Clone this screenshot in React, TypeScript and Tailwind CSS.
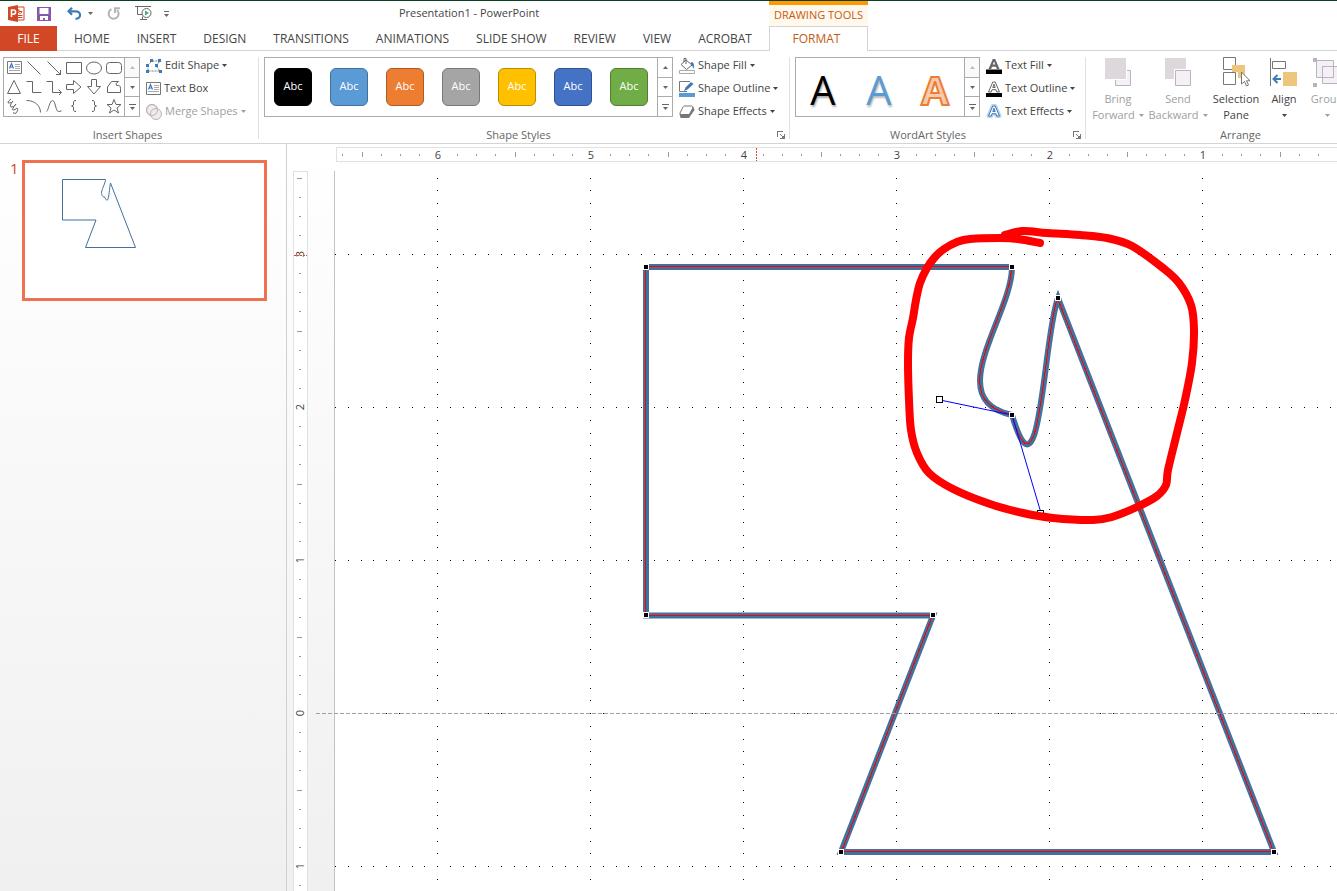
import type { ReactNode } from "react";

const TABS = [
  "HOME",
  "INSERT",
  "DESIGN",
  "TRANSITIONS",
  "ANIMATIONS",
  "SLIDE SHOW",
  "REVIEW",
  "VIEW",
  "ACROBAT",
];

const SHAPE_STYLES = [
  { name: "Black", className: "border-black bg-black" },
  { name: "Blue", className: "border-[#41719c] bg-[#5b9bd5]" },
  { name: "Orange", className: "border-[#ae5a21] bg-[#ed7d31]" },
  { name: "Gray", className: "border-[#787878] bg-[#a5a5a5]" },
  { name: "Gold", className: "border-[#bc8c00] bg-[#ffc000]" },
  { name: "Dark blue", className: "border-[#2f528f] bg-[#4472c4]" },
  { name: "Green", className: "border-[#507e32] bg-[#70ad47]" },
];

/* ---------- small shared pieces ---------- */

const Caret = ({ className = "" }: { className?: string }) => (
  <svg width="5" height="3" className={`shrink-0 ${className}`} fill="currentColor">
    <path d="M0 0h5L2.5 3z" />
  </svg>
);

const Launcher = ({ label }: { label: string }) => (
  <button aria-label={label} className="absolute right-1 bottom-1 text-[#777]">
    <svg width="8" height="8" fill="none" stroke="currentColor" shapeRendering="crispEdges">
      <path d="M.5 6V.5H6M3 3l3 3M7.5 3v4.5H3M6.5 5v1.5H5" />
    </svg>
  </button>
);

const GalleryScroll = ({ upDisabled = false }: { upDisabled?: boolean }) => (
  <div className="flex w-[15px] shrink-0 flex-col divide-y divide-[#ababab] border-l border-[#ababab] text-[#666]">
    <button
      aria-label="Previous row"
      className={`flex flex-1 items-center justify-center ${upDisabled ? "bg-[#fafafa] text-[#bbb]" : ""}`}
    >
      <Caret className="rotate-180" />
    </button>
    <button aria-label="Next row" className="flex flex-1 items-center justify-center">
      <Caret />
    </button>
    <button aria-label="More" className="flex flex-1 flex-col items-center justify-center gap-0.5">
      <span className="h-px w-[7px] bg-current" />
      <Caret />
    </button>
  </div>
);

const Group = ({
  label,
  className,
  launcher,
  children,
}: {
  label: string;
  className: string;
  launcher?: string;
  children: ReactNode;
}) => (
  <section
    aria-label={label}
    className={`relative flex shrink-0 flex-col justify-between ${className}`}
  >
    <div className="flex">{children}</div>
    <div className="text-center leading-4 text-[#666]">{label}</div>
    {launcher && <Launcher label={launcher} />}
  </section>
);

const Divider = () => <div className="mb-1 w-px shrink-0 bg-[#e1e1e1]" />;

const Command = ({
  icon,
  label,
  caret = true,
  disabled = false,
}: {
  icon: ReactNode;
  label: string;
  caret?: boolean;
  disabled?: boolean;
}) => (
  <button
    disabled={disabled}
    className={`flex h-[23px] items-center gap-[3px] whitespace-nowrap ${disabled ? "text-[#a0a0a0]" : "text-[#444]"}`}
  >
    {icon}
    <span>{label}</span>
    {caret && <Caret />}
  </button>
);

/* ---------- quick access icons ---------- */

const PowerPointIcon = () => (
  <svg width="17" height="17" viewBox="0 0 17 17">
    <path d="M9 2h7v13H9z" fill="#fff" stroke="#d24726" />
    <path d="M11 4.500a2 2 0 1 0 3 2h-3zM10 10.500h4.500M10 12.500h4.500" fill="none" stroke="#d24726" />
    <path d="M0 2l10-2v17L0 15z" fill="#d24726" />
    <path d="M3.500 12V5h2a2 2 0 0 1 0 4.200h-2" fill="none" stroke="#fff" strokeWidth="1.600" />
  </svg>
);

const SaveIcon = () => (
  <svg width="14" height="14" viewBox="0 0 14 14">
    <path d="M0 0h14v14H0z" fill="#8757a9" />
    <path d="M2.500 1h9v6h-9zM3 9h8v4H8v-2H6v2H3z" fill="#fff" />
  </svg>
);

const UndoIcon = () => (
  <svg width="15" height="13" viewBox="0 0 15 13" fill="none" stroke="#3f79b7" strokeWidth="2.200">
    <path d="M5 .800L1.500 4.300 5 7.800M2 4.300h7c5.500 0 5.500 7.500-.500 7.500" />
  </svg>
);

const RepeatIcon = () => (
  <svg width="14" height="14" viewBox="0 0 14 14" fill="none" stroke="#b5b5b5" strokeWidth="2">
    <path d="M4.500 2.200A5 5 0 1 0 10 3" />
    <path d="M8 6V1.200h5" />
  </svg>
);

const SlideShowIcon = () => (
  <svg width="17" height="17" viewBox="0 0 17 17" fill="none" stroke="#666">
    <path d="M0 1.500h16M2.500 2v7.500h5M5 14.500h2.500v-3M7.500 14.500H12" />
    <circle cx="11.500" cy="8" r="4.500" fill="#fff" />
    <path d="M10 5.500v5L14 8z" fill="#4fa37c" stroke="none" />
  </svg>
);

/* ---------- ribbon icons ---------- */

const TextBoxIcon = () => (
  <svg width="15" height="13" viewBox="0 0 15 13" fill="none">
    <path d="M.5.5h14v12H.5z" fill="#fff" stroke="#777" />
    <path d="M2.500 7.500L4.500 2.500l2 5M3.200 6h2.600" stroke="#3f79b7" strokeWidth="1.200" />
    <path d="M8 3.500h5M8 5.500h5M8 7.500h5M2 9.500h11" stroke="#aaa" />
  </svg>
);

const EditShapeIcon = () => (
  <svg width="16" height="14" viewBox="0 0 16 14">
    <path d="M2 6L6 2h8l-4 5 4 5H2z" fill="none" stroke="#777" strokeDasharray="2 1" />
    <path
      d="M4 0h3v3H4zM12 0h3v3h-3zM0 5h3v3H0zM9 5h3v3H9zM0 11h3v3H0zM13 11h3v3h-3z"
      fill="#3f79b7"
    />
  </svg>
);

const MergeIcon = () => (
  <svg width="16" height="16" viewBox="0 0 16 16" fill="#efebef" stroke="#b9b4b9">
    <circle cx="6" cy="6" r="5.500" />
    <circle cx="10" cy="10" r="5.500" />
    <circle cx="6" cy="6" r="5.500" fill="none" />
  </svg>
);

const FillIcon = () => (
  <svg width="16" height="16" viewBox="0 0 16 16" fill="none" stroke="#666">
    <path d="M2 6.500L7 2l6 5-5.500 4.500zM7 6V.5h-2V4" fill="#fff" />
    <path d="M12 4c3 0 3.500 3 2.500 7-1-2-1-4-2.500-4.500z" fill="#3f79b7" stroke="none" />
    <path d="M.5 12.500h15v3H.5z" fill="#fff" stroke="#aaa" />
  </svg>
);

const OutlineIcon = () => (
  <svg width="16" height="16" viewBox="0 0 16 16" fill="none">
    <path d="M11 .5H.5v10H8" stroke="#777" />
    <path d="M5 10l1.500-3.500L12 1l2.500 2L8.500 8.500z" fill="#3f79b7" />
    <path d="M0 12h16v4H0z" fill="#5b9bd5" />
  </svg>
);

const EffectsIcon = () => (
  <svg width="16" height="14" viewBox="0 0 16 14">
    <path d="M.5 9l1 4h8.500l5.500-8-1-3z" fill="#777" />
    <path
      d="M5.500 1h7a1.500 1.500 0 0 1 1.300 2l-3 5.500a2 2 0 0 1-1.700 1H2A1.200 1.200 0 0 1 1 8l3-6a2 2 0 0 1 1.500-1z"
      fill="#fff"
      stroke="#777"
    />
  </svg>
);

const LETTER_A = "M2.500 11L6.800 1h2.400l4.300 10h-2.700L10 8.700H6L5.200 11zM6.800 6.500h2.400L8 3.200z";

const TextFillIcon = () => (
  <svg width="16" height="16" viewBox="0 0 16 16">
    <path d={LETTER_A} fill="#666" />
    <path d="M0 11.500h16V16H0z" />
  </svg>
);

const TextOutlineIcon = () => (
  <svg width="16" height="16" viewBox="0 0 16 16">
    <path d={LETTER_A} fill="#fff" stroke="#666" />
    <path d="M0 12h16v4H0z" />
  </svg>
);

const TextEffectsIcon = () => (
  <svg width="16" height="16" viewBox="0 -1 16 16" strokeLinejoin="round">
    <path d={LETTER_A} fill="none" stroke="#b7d3ee" strokeWidth="4" />
    <path d={LETTER_A} fill="#fff" stroke="#3f79b7" />
  </svg>
);

const BringForwardIcon = () => (
  <svg width="28" height="30" viewBox="0 0 28 30">
    <path d="M11.500 13.500h15v15h-15z" fill="#f5f0f7" stroke="#b9b4b9" />
    <path d="M0 0h23v23H0z" fill="#fff" />
    <path d="M1 1h21v21H1z" fill="#dcd8dc" />
  </svg>
);

const SendBackwardIcon = () => (
  <svg width="28" height="30" viewBox="0 0 28 30">
    <path d="M1 1h21v21H1z" fill="#dcd8dc" />
    <path d="M10 12h18v18H10z" fill="#fff" />
    <path d="M11.500 13.500h15v15h-15z" fill="#f5f0f7" stroke="#b9b4b9" />
  </svg>
);

const SelectionPaneIcon = () => (
  <svg width="28" height="30" viewBox="0 0 28 30">
    <path d="M1.500.5h12v12h-12zM1.500 15.500h12v12h-12z" fill="#fff" stroke="#777" />
    <path d="M10 8h13v13h-7v-6h-6z" fill="#eec57c" />
    <path d="M19.500 15v12l3-2.500 2 4.500 2-1-2-4.200h3.500z" fill="#fff" stroke="#777" />
  </svg>
);

const AlignIcon = () => (
  <svg width="28" height="30" viewBox="0 0 28 30">
    <path d="M.5 1v28M2.500 4.500h13v7h-13z" fill="none" stroke="#777" />
    <path d="M13 15h14v14H13z" fill="#eec57c" />
    <path d="M11 22H4M7.500 18L3.500 22l4 4" fill="none" stroke="#3f79b7" strokeWidth="2" />
  </svg>
);

const GroupIcon = () => (
  <svg width="28" height="30" viewBox="0 0 28 30">
    <path d="M3.500 3.500h17v17h-17zM9.500 9.500h17v17h-17z" fill="#f5f0f7" stroke="#b9b4b9" />
    <path d="M9.500 9.500h11v11h-11z" fill="none" stroke="#b9b4b9" />
    <path d="M0 1h4v4H0zM24 1h4v4h-4zM0 26h4v4H0zM24 26h4v4h-4z" fill="#b9b4b9" />
  </svg>
);

// one drawing for each cell of the insert gallery, 16x16
const SHAPES: { name: string; d: string }[] = [
  { name: "Line", d: "M1.500 1.500l13 13" },
  { name: "Arrow", d: "M1.500 1.500l13 13M14.500 10v4.500H10" },
  { name: "Rectangle", d: "M.5 2.500h15v11H.5z" },
  { name: "Oval", d: "M.5 8a7.500 6 0 0 1 15 0 7.500 6 0 0 1-15 0" },
  {
    name: "Rounded rectangle",
    d: "M3.500 2.500h9a3 3 0 0 1 3 3v5a3 3 0 0 1-3 3h-9a3 3 0 0 1-3-3v-5a3 3 0 0 1 3-3z",
  },
  { name: "Triangle", d: "M8 1.500L14.500 14.500h-13z" },
  { name: "Elbow connector", d: "M.5 2.500h6v11h9" },
  { name: "Elbow arrow", d: "M.5 2.500h6v11h9M12.500 10.500l3 3-3 3" },
  { name: "Right arrow", d: "M.5 5.500h7v-4L15 8l-7.500 6.500v-4h-7z" },
  { name: "Down arrow", d: "M5.500.5v7h-4L8 15l6.500-7.500h-4v-7z" },
  { name: "Freeform", d: "M5.500 2.500h7q-4 2-2 4 4-1 4 3v4H1.500V8z" },
  { name: "Scribble", d: "M5 1Q0 5 3 5t4-2Q3 8 5 9t5-3Q5 12 7 12t4-2q2 1-1 5t-2-1" },
  { name: "Arc", d: "M.5 2.500c8 0 14 5 14 12" },
  { name: "Curve", d: "M.5 13.500c2-1 3-11 6-11s3 11 6 11l3-.500" },
  { name: "Left brace", d: "M10 2.500H8.500L7.500 4v3l-2 1 2 1v3l1 1.500H10" },
  { name: "Right brace", d: "M6 2.500h1.500l1 1.500v3l2 1-2 1v3l-1 1.500H6" },
  { name: "Star", d: "M8 1.500l2 5h5l-4 3.500 1.500 5L8 12l-4.500 3L5 10 1 6.500h5z" },
];

/* ---------- ribbon ---------- */

const TitleAndTabs = () => (
  <header className="flex border-t border-[#0b4023]">
    <div className="flex w-[769px] shrink-0 flex-col">
      <div className="flex h-[25px] items-center">
        <div className="flex w-[173px] items-center pl-2">
          <button aria-label="PowerPoint">
            <PowerPointIcon />
          </button>
          <button aria-label="Save" className="ml-3">
            <SaveIcon />
          </button>
          <button aria-label="Undo" className="ml-4 flex items-center gap-1.5 text-[#666]">
            <UndoIcon />
            <Caret />
          </button>
          <button aria-label="Repeat" className="ml-3.5">
            <RepeatIcon />
          </button>
          <button aria-label="Start slide show" className="ml-3.5">
            <SlideShowIcon />
          </button>
          <button
            aria-label="Customize toolbar"
            className="ml-3 flex flex-col items-center gap-0.5 text-[#666]"
          >
            <span className="h-px w-[5px] bg-current" />
            <Caret />
          </button>
        </div>
        <h1 className="flex-1 pr-1 text-center text-[#444]">Presentation1 - PowerPoint</h1>
      </div>
      <nav className="flex h-[25px] border-b border-[#d4d4d4] text-xs text-[#444]">
        <button className="-mb-px w-[57px] bg-[#d24726] text-white">FILE</button>
        <div className="flex flex-1 justify-between pt-px pr-[17px] pl-[17px]">
          {TABS.map((tab) => (
            <button key={tab} className="whitespace-nowrap">
              {tab}
            </button>
          ))}
        </div>
      </nav>
    </div>
    <div className="flex w-[99px] shrink-0 flex-col text-center text-[#c55a11]">
      <div className="h-[25px] border-t-4 border-[#ff9900] bg-[#fff8ec] leading-[19px]">
        DRAWING TOOLS
      </div>
      <button className="flex-1 border-x border-t border-[#d4d4d4] bg-white pr-1 text-xs">
        FORMAT
      </button>
    </div>
    <div className="flex-1 border-b border-[#d4d4d4]" />
  </header>
);

const InsertShapes = () => (
  <Group label="Insert Shapes" className="w-[258px] pr-1.5 pl-[3px]">
    <div className="flex h-[60px] w-[137px] shrink-0 border border-[#ababab]">
      <div className="grid flex-1 grid-cols-6 place-items-center text-[#666]">
        <button aria-label="Text box">
          <TextBoxIcon />
        </button>
        {SHAPES.map((shape) => (
          <button key={shape.name} aria-label={shape.name}>
            <svg width="16" height="16" viewBox="0 0 16 16" fill="none" stroke="currentColor">
              <path d={shape.d} />
            </svg>
          </button>
        ))}
      </div>
      <GalleryScroll upDisabled />
    </div>
    <div className="-mt-[3px] ml-1.5 flex flex-col items-start">
      <Command icon={<EditShapeIcon />} label="Edit Shape" />
      <Command icon={<TextBoxIcon />} label="Text Box" caret={false} />
      <Command icon={<MergeIcon />} label="Merge Shapes" disabled />
    </div>
  </Group>
);

const ShapeStyles = () => (
  <Group label="Shape Styles" className="w-[530px] pr-4 pl-[5px]" launcher="Format shape">
    <div className="flex h-[60px] w-[409px] shrink-0 border border-[#ababab]">
      <div className="flex flex-1 items-center gap-[18px] pl-[9px]">
        {SHAPE_STYLES.map((style) => (
          <button
            key={style.name}
            aria-label={style.name}
            className={`size-[38px] shrink-0 rounded-md border pb-px text-white ${style.className}`}
          >
            Abc
          </button>
        ))}
      </div>
      <GalleryScroll />
    </div>
    <div className="-mt-[3px] ml-1.5 flex flex-col items-start">
      <Command icon={<FillIcon />} label="Shape Fill" />
      <Command icon={<OutlineIcon />} label="Shape Outline" />
      <Command icon={<EffectsIcon />} label="Shape Effects" />
    </div>
  </Group>
);

const WordArtStyles = () => (
  <Group label="WordArt Styles" className="w-[295px] pr-6 pl-[5px]" launcher="Format text effects">
    <div className="flex h-[60px] w-[185px] shrink-0 border border-[#ababab]">
      <div className="flex flex-1 text-[40px] leading-[64px]">
        <button className="w-[54px] text-black [text-shadow:1px_2px_2px_#aaa]">A</button>
        <button className="w-[58px] text-[#5b9bd5] [text-shadow:1px_2px_2px_#bbb]">A</button>
        <button className="w-[54px] font-bold text-[#f8cbad] [-webkit-text-stroke:2px_#ed7d31]">
          A
        </button>
      </div>
      <GalleryScroll upDisabled />
    </div>
    <div className="-mt-[3px] ml-1.5 flex flex-col items-start">
      <Command icon={<TextFillIcon />} label="Text Fill" />
      <Command icon={<TextOutlineIcon />} label="Text Outline" />
      <Command icon={<TextEffectsIcon />} label="Text Effects" />
    </div>
  </Group>
);

const BigCommand = ({
  icon,
  lines,
  className,
  disabled = false,
}: {
  icon: ReactNode;
  lines: [string, string?];
  className: string;
  disabled?: boolean;
}) => (
  <button
    disabled={disabled}
    className={`flex shrink-0 flex-col items-center leading-4 whitespace-nowrap ${disabled ? "text-[#a0a0a0]" : "text-[#444]"} ${className}`}
  >
    {icon}
    <span className="mt-1">{lines[0]}</span>
    <span className="flex h-4 items-center gap-1">
      {lines[1]}
      {lines[1] !== "Pane" && <Caret />}
    </span>
  </button>
);

const Arrange = () => (
  <Group label="Arrange" className="w-[307px] pl-0.5">
    <BigCommand
      icon={<BringForwardIcon />}
      lines={["Bring", "Forward"]}
      className="w-[60px]"
      disabled
    />
    <BigCommand
      icon={<SendBackwardIcon />}
      lines={["Send", "Backward"]}
      className="w-[60px]"
      disabled
    />
    <BigCommand icon={<SelectionPaneIcon />} lines={["Selection", "Pane"]} className="w-[56px]" />
    <BigCommand icon={<AlignIcon />} lines={["Align"]} className="w-10" />
    <BigCommand icon={<GroupIcon />} lines={["Group"]} className="w-[46px]" disabled />
  </Group>
);

/* ---------- workspace ---------- */

const INCH = 153;

// eight divisions to the inch, the fourth one is longer
const ticks = (first: number, count: number, zero: number) =>
  Array.from({ length: count }, (_, i) => i + first)
    .filter((i) => i % 8 !== 0)
    .map((i) => ({ at: Math.round(zero + (i * INCH) / 8), long: i % 4 === 0 }));

const HorizontalRuler = () => (
  <svg className="mt-[3px] ml-[49px] block h-[15px] w-[calc(100%-49px)] border border-r-0 border-[#e1e1e1] bg-white">
    <g fill="#999">
      {ticks(-5, 120, 101).map((tick) => (
        <rect
          key={tick.at}
          x={tick.at}
          y={tick.long ? 4 : 6}
          width="1"
          height={tick.long ? 5 : 2}
        />
      ))}
    </g>
    <g fill="#444" textAnchor="middle">
      {[6, 5, 4, 3, 2, 1].map((inch, i) => (
        <text key={inch} x={101 + i * INCH} y="11">
          {inch}
        </text>
      ))}
    </g>
    <path d="M419.500 0v13" stroke="#d24726" strokeDasharray="2 1" />
  </svg>
);

const VerticalRuler = () => (
  <svg className="ml-1.5 w-[15px] shrink-0 border border-b-0 border-[#e1e1e1] bg-white">
    <g fill="#999">
      {ticks(-4, 100, 82).map((tick) => (
        <rect
          key={tick.at}
          x={tick.long ? 3 : 5}
          y={tick.at}
          width={tick.long ? 5 : 2}
          height="1"
        />
      ))}
    </g>
    <g fill="#444" textAnchor="middle">
      {[3, 2, 1, 0, 1].map((inch, i) => (
        <text key={i} transform={`translate(10 ${82 + i * INCH}) rotate(-90)`}>
          {inch}
        </text>
      ))}
    </g>
    <path d="M0 83.500h13" stroke="#d24726" strokeDasharray="2 1" />
  </svg>
);

// dotted grid, twelve dots to the inch
const dotRow = (y: number) =>
  Array.from({ length: 200 }, (_, i) => `M${Math.round(129 + (i - 8) * 12.75)} ${y}h1`).join("");
const dotColumn = (x: number) =>
  Array.from({ length: 100 }, (_, i) => `M${x} ${Math.round(83 + (i - 6) * 12.75)}.5h1`).join("");

const GRID = [
  ...[0, 1, 2, 3, 4, 5].map((i) => dotRow(83.5 + i * INCH)),
  ...Array.from({ length: 14 }, (_, i) => dotColumn(129 + i * INCH)),
].join("");

const OUTLINE =
  "M646 267H1012C1012 316 940 400 1012 415C1041 513 1043 337 1058 298L1274 852H841L933 615.500H646z";

// hairline down the middle of the outline
const EDIT_PATH =
  "M645.500 266.500H1011.500C1011.500 316 940 400 1011.500 414.500C1041 513 1043 337 1057.500 298L1273.500 851.500H841.500L932.500 615.500H645.500z";

const HANDLES = [
  [646, 267],
  [1012, 267],
  [1012, 415],
  [1058, 298],
  [1274, 852],
  [841, 852],
  [933, 615],
  [646, 615],
];

const SCRIBBLE = [
  [1040, 243], [1018, 239], [1000, 238], [970, 239], [957, 242], [944, 249], [935, 257],
  [927, 268], [920, 283], [916, 300], [913, 318], [909, 338], [908, 363], [909, 400],
  [911, 430], [917, 453], [929, 473], [953, 489], [990, 504], [1023, 513], [1053, 518],
  [1093, 520], [1112, 517], [1137, 507], [1157, 496], [1166, 485], [1168, 470], [1177, 433],
  [1185, 400], [1192, 363], [1194, 330], [1191, 305], [1179, 283], [1163, 268], [1132, 246],
  [1107, 238], [1080, 235], [1047, 233], [1023, 231], [1005, 235],
];

// Catmull-Rom spline through the points
const spline = (points: number[][]) =>
  points.slice(1).reduce(
    (d, p, i) => {
      const a = points[Math.max(i - 1, 0)];
      const b = points[i];
      const c = points[Math.min(i + 2, points.length - 1)];
      const c1 = [b[0] + (p[0] - a[0]) / 6, b[1] + (p[1] - a[1]) / 6];
      const c2 = [p[0] - (c[0] - b[0]) / 6, p[1] - (c[1] - b[1]) / 6];
      return `${d}C${c1} ${c2} ${p}`;
    },
    `M${points[0]}`,
  );

const SlideCanvas = () => (
  <svg className="min-w-0 flex-1" role="img" aria-label="Slide being edited">
    <rect x="27" width="100%" height="100%" fill="#fff" />
    <path d="M26.500 0v4000" stroke="#c3c3c3" />
    <path d={GRID} stroke="#000" shapeRendering="crispEdges" />
    <g transform="translate(-308 -171)" fill="none">
      <path d={OUTLINE} stroke="#41719c" strokeWidth="6" />
      <path d={EDIT_PATH} stroke="#f00" shapeRendering="crispEdges" />
      <path d="M316 713.500H4000" stroke="#a0a0a0" strokeDasharray="4 2" />
      <path d="M940 400L1012 415 1041 513" stroke="#00f" />
      <g fill="#fff" stroke="#000">
        <rect x="936.500" y="396.500" width="6" height="6" />
        <rect x="1037.500" y="510.500" width="6" height="6" />
      </g>
      <g fill="#000" stroke="#fff">
        {HANDLES.map(([x, y]) => (
          <rect key={`${x}-${y}`} x={x - 2.5} y={y - 2.5} width="5" height="5" />
        ))}
      </g>
      <path
        d={spline(SCRIBBLE)}
        stroke="#f00"
        strokeWidth="8"
        strokeLinecap="round"
        strokeLinejoin="round"
      />
    </g>
  </svg>
);

const Thumbnails = () => (
  <aside className="flex w-[287px] shrink-0 items-start gap-1 border-r border-[#d0d0d0] pt-4 pl-[10px]">
    <span className="w-2 text-[15px] leading-4 text-[#d24726]">1</span>
    <button
      aria-label="Slide 1"
      className="h-[141px] w-[245px] border-[3px] border-[#f0714f] bg-white"
    >
      <svg width="239" height="135" className="block" fill="none" stroke="#41719c">
        <path d="M37.500 16.500H80.500C80.500 22 72 32 80 34.500C84 44 84 26 85.500 20L110.500 84.500H60.500L71 57H37.500z" />
      </svg>
    </button>
  </aside>
);

export default function App() {
  return (
    <div className="flex h-screen flex-col overflow-hidden bg-white font-['Open_Sans','Noto_Sans',sans-serif] text-[11px]">
      <TitleAndTabs />
      <div className="flex h-[93px] shrink-0 overflow-hidden border-b border-[#d4d4d4]">
        <div className="flex pt-1.5">
          <InsertShapes />
          <Divider />
          <ShapeStyles />
          <Divider />
          <WordArtStyles />
          <Divider />
          <Arrange />
        </div>
      </div>
      <main className="flex min-h-0 flex-1 bg-linear-to-b from-white to-[#f0f0f0]">
        <Thumbnails />
        <div className="flex min-w-0 flex-1 flex-col">
          <HorizontalRuler />
          <div className="mt-[9px] flex min-h-0 flex-1">
            <VerticalRuler />
            <SlideCanvas />
          </div>
        </div>
      </main>
    </div>
  );
}
